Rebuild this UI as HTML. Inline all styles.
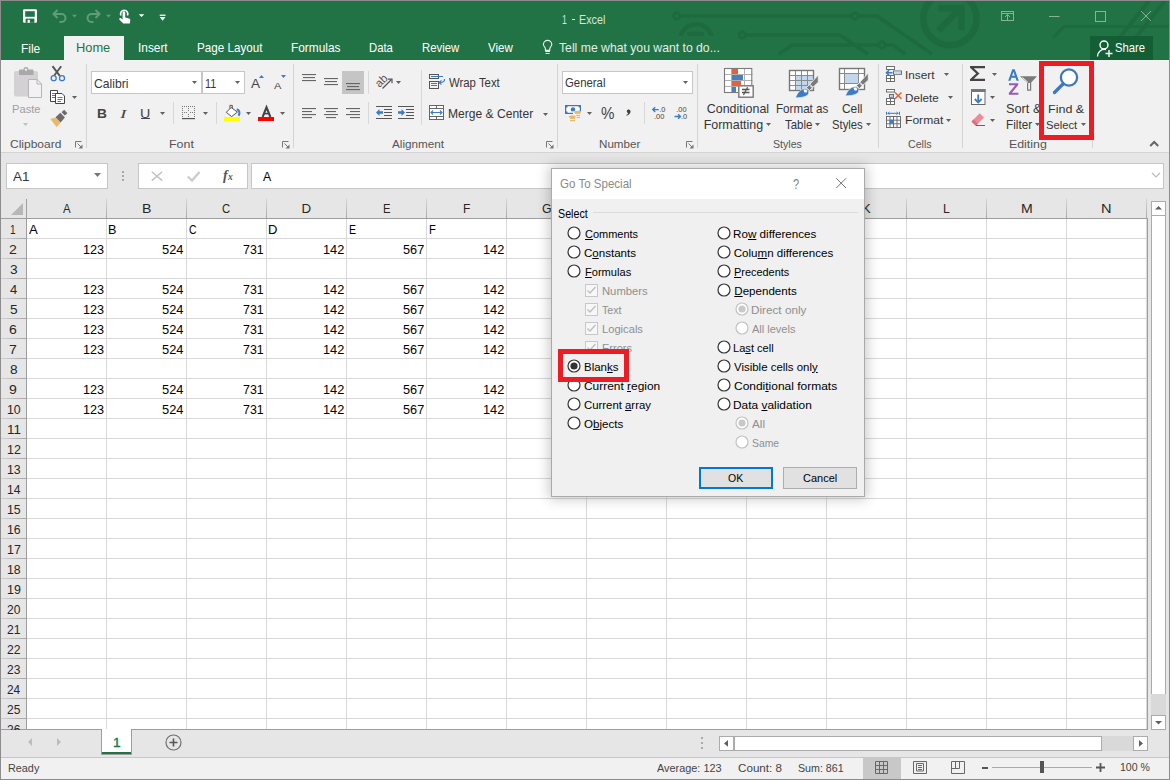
<!DOCTYPE html><html><head><meta charset="utf-8"><title>Excel</title><style>
*{margin:0;padding:0;box-sizing:border-box}
html,body{width:1170px;height:780px;overflow:hidden;background:#fff;font-family:"Liberation Sans",sans-serif;color:#262626}
.a{position:absolute}
.t{position:absolute;white-space:nowrap;transform-origin:0 0;line-height:normal}
svg{position:absolute;overflow:visible}
</style></head><body>
<div class="a" style="left:0px;top:0px;width:1170px;height:780px;background:#f1f1f1;"></div>
<div class="a" style="left:0px;top:0px;width:1170px;height:60px;background:#217346;"></div>
<svg style="left:0px;top:0px" width="1170" height="60" viewBox="0 0 1170 60"><defs><clipPath id="cpA"><rect x="670" y="0" width="60" height="36"/></clipPath></defs>
<g fill="none" stroke="#1e6a3f" stroke-width="3.6">
<circle cx="676.8" cy="16" r="3.2" stroke-width="3"/><path d="M680 16H851.5"/><circle cx="855" cy="16" r="3.2" stroke-width="3"/><path d="M858.5 16H877L932 54"/>
<circle cx="742.2" cy="35" r="3.2" stroke-width="3"/><path d="M745.5 35H840L868 54"/>
<path d="M779 54L792 45H878.5"/><circle cx="882" cy="45" r="3.2" stroke-width="3"/><path d="M885.5 45H893L905 54"/>
<circle cx="696.2" cy="40.3" r="16" stroke-width="4.4" clip-path="url(#cpA)"/>
<circle cx="949.9" cy="18.6" r="26.6" stroke-width="6.7"/>
<path d="M1053 38L1064 26.5H1170" stroke-width="3"/>
<path d="M1120 37L1149 1M1136 37L1165 1" stroke-width="4"/>
</g>
<rect x="687" y="31.7" width="16.7" height="4.2" fill="#1e6a3f"/>
<path d="M938.5 30.5L960 9" stroke="#1e6a3f" stroke-width="6.5" fill="none"/>
<path d="M938.3 8.35H961.45V30.3" stroke="#1e6a3f" stroke-width="6.5" fill="none"/></svg>
<svg style="left:0px;top:0px" width="200" height="35" viewBox="0 0 200 35">
<rect x="23" y="9.2" width="14" height="13.6" rx="1.2" fill="#fff"/>
<rect x="25.2" y="11.2" width="9.6" height="5.6" fill="#217346"/>
<rect x="25.6" y="18.6" width="8.8" height="4.2" fill="#217346"/>
<rect x="27.6" y="19.8" width="2.2" height="3" fill="#fff"/>
<g fill="none" stroke="#5f9c79" stroke-width="2">
<path d="M53.5 14H61.5A4 4 0 0 1 61.5 22H59.5"/><path d="M57.5 10L53.5 14L57.5 18"/>
<path d="M99.5 14H91.5A4 4 0 0 0 91.5 22H93.5"/><path d="M95.5 10L99.5 14L95.5 18"/></g>
<path d="M72 14.8H77L74.5 17.5Z M106 14.8H111L108.5 17.5Z" fill="#5f9c79"/>
<g fill="#fff"><path d="M138.8 14.2H144.3L141.5 17Z"/><path d="M159.7 17H165.5L162.6 20.8Z"/><rect x="159.7" y="14.6" width="5.8" height="1.3"/></g>
<g fill="none" stroke="#fff" stroke-width="1.6"><path d="M121 15.5A3.6 3.6 0 1 1 127.4 15.5"/></g>
<path d="M122.6 12.6A1.3 1.3 0 0 1 125.2 12.6V17.6L129 18.6A1.5 1.5 0 0 1 130.3 20.2L129.8 23.6H123.2L119.5 19.7A1 1 0 0 1 121 18.3L122.6 19.5Z" fill="#fff"/>
</svg>
<div class="a" style="left:64px;top:36px;width:60px;height:25px;background:#f1f1f1;"></div>
<div class="t" style="left:20.50px;top:42.03px;font-size:12.46px;color:#ffffff;transform:scaleX(0.9574);">File</div>
<div class="t" style="left:138.26px;top:41.03px;font-size:12.46px;color:#ffffff;transform:scaleX(0.9512);">Insert</div>
<div class="t" style="left:196.53px;top:41.03px;font-size:12.46px;color:#ffffff;transform:scaleX(0.9360);">Page Layout</div>
<div class="t" style="left:290.91px;top:41.03px;font-size:12.46px;color:#ffffff;transform:scaleX(0.9519);">Formulas</div>
<div class="t" style="left:368.85px;top:41.03px;font-size:12.46px;color:#ffffff;transform:scaleX(0.9057);">Data</div>
<div class="t" style="left:421.85px;top:41.03px;font-size:12.46px;color:#ffffff;transform:scaleX(0.9101);">Review</div>
<div class="t" style="left:488.00px;top:41.03px;font-size:12.46px;color:#ffffff;transform:scaleX(0.9255);">View</div>
<div class="t" style="left:76.34px;top:41.03px;font-size:12.46px;color:#217346;transform:scaleX(1.0289);">Home</div>
<svg style="left:535px;top:36px" width="25" height="22" viewBox="0 0 25 22"><g transform="translate(-535,-36)"><path d="M545.4 50.2V48.8C545.4 47.3 543.4 46.2 543.4 44.6A4.2 4.2 0 0 1 551.8 44.6C551.8 46.2 549.8 47.3 549.8 48.8V50.2Z" fill="none" stroke="#eef4f0" stroke-width="1.1"/>
<rect x="545.3" y="50" width="4.6" height="2" fill="#eef4f0"/><rect x="545.6" y="53" width="4" height="1" fill="#eef4f0"/></g></svg>
<div class="t" style="left:558.99px;top:41.03px;font-size:12.46px;color:#e3eee7;transform:scaleX(0.9803);">Tell me what you want to do...</div>
<div class="t" style="left:561.95px;top:12.90px;font-size:12.61px;color:#d3e6db;transform:scaleX(0.6889);">1</div>
<div class="a" style="left:572px;top:19px;width:3.1px;height:1.2px;background:#d3e6db;"></div>
<div class="t" style="left:578.89px;top:12.90px;font-size:12.61px;color:#d3e6db;transform:scaleX(0.8517);">Excel</div>
<svg style="left:0px;top:0px" width="1170" height="35" viewBox="0 0 1170 35"><g fill="none" stroke="#86b397" stroke-width="1">
<rect x="1001.5" y="11.5" width="12" height="9"/><path d="M1001.5 13.5H1013.5M1007.5 20.5V14.5M1005 17L1007.5 14.5L1010 17"/>
<path d="M1049 16.5H1059.5"/><rect x="1095.5" y="11.5" width="10" height="10"/><path d="M1141 11L1151 21M1151 11L1141 21"/></g></svg>
<div class="a" style="left:1090px;top:36px;width:63px;height:24px;background:#135e35;"></div>
<svg style="left:1096px;top:40px" width="18" height="18" viewBox="0 0 18 18"><g fill="none" stroke="#fff" stroke-width="1.4"><circle cx="8" cy="5" r="4"/><path d="M1.5 16.5A7 7 0 0 1 10 9.5"/><path d="M13 10V17M9.5 13.5H16.5"/></g></svg>
<div class="t" style="left:1115.44px;top:40.47px;font-size:12.75px;color:#ffffff;transform:scaleX(0.8831);">Share</div>
<div class="a" style="left:0px;top:60px;width:1170px;height:92px;background:#f1f1f1;"></div>
<div class="a" style="left:0px;top:152px;width:1170px;height:1px;background:#d4d4d4;"></div>
<div class="a" style="left:86px;top:64px;width:1px;height:84px;background:#d4d4d4;"></div>
<div class="a" style="left:293px;top:64px;width:1px;height:84px;background:#d4d4d4;"></div>
<div class="a" style="left:557px;top:64px;width:1px;height:84px;background:#d4d4d4;"></div>
<div class="a" style="left:697px;top:64px;width:1px;height:84px;background:#d4d4d4;"></div>
<div class="a" style="left:878px;top:64px;width:1px;height:84px;background:#d4d4d4;"></div>
<div class="a" style="left:962px;top:64px;width:1px;height:84px;background:#d4d4d4;"></div>
<div class="a" style="left:1092px;top:64px;width:1px;height:84px;background:#d4d4d4;"></div>
<div class="a" style="left:368px;top:71px;width:1px;height:23px;background:#d8d8d8;"></div>
<div class="a" style="left:368px;top:102px;width:1px;height:22px;background:#d8d8d8;"></div>
<div class="a" style="left:421px;top:70px;width:1px;height:55px;background:#d8d8d8;"></div>
<div class="a" style="left:644px;top:102px;width:1px;height:22px;background:#d8d8d8;"></div>
<div class="a" style="left:173px;top:102px;width:1px;height:22px;background:#d8d8d8;"></div>
<div class="a" style="left:216px;top:102px;width:1px;height:22px;background:#d8d8d8;"></div>
<div class="t" style="left:10.00px;top:137.90px;font-size:11.30px;color:#555555;transform:scaleX(1.0626);">Clipboard</div>
<div class="t" style="left:169.06px;top:137.90px;font-size:11.30px;color:#555555;transform:scaleX(1.1029);">Font</div>
<div class="t" style="left:391.50px;top:137.90px;font-size:11.30px;color:#555555;transform:scaleX(1.0366);">Alignment</div>
<div class="t" style="left:598.53px;top:137.90px;font-size:11.30px;color:#555555;transform:scaleX(1.0296);">Number</div>
<div class="t" style="left:772.97px;top:137.90px;font-size:11.30px;color:#555555;transform:scaleX(0.9391);">Styles</div>
<div class="t" style="left:908.07px;top:137.90px;font-size:11.30px;color:#555555;transform:scaleX(0.9395);">Cells</div>
<div class="t" style="left:1008.87px;top:137.90px;font-size:11.30px;color:#555555;transform:scaleX(1.0934);">Editing</div>
<svg style="left:75px;top:141px" width="8" height="8" viewBox="0 0 8 8"><g fill="none" stroke="#777" stroke-width="1"><path d="M0.5 6.5V0.5H6.5"/><path d="M2.5 2.5L6.5 6.5"/></g><path d="M7.5 3.5V7.5H3.5Z" fill="#777"/></svg>
<svg style="left:282px;top:141px" width="8" height="8" viewBox="0 0 8 8"><g fill="none" stroke="#777" stroke-width="1"><path d="M0.5 6.5V0.5H6.5"/><path d="M2.5 2.5L6.5 6.5"/></g><path d="M7.5 3.5V7.5H3.5Z" fill="#777"/></svg>
<svg style="left:546px;top:141px" width="8" height="8" viewBox="0 0 8 8"><g fill="none" stroke="#777" stroke-width="1"><path d="M0.5 6.5V0.5H6.5"/><path d="M2.5 2.5L6.5 6.5"/></g><path d="M7.5 3.5V7.5H3.5Z" fill="#777"/></svg>
<svg style="left:686px;top:141px" width="8" height="8" viewBox="0 0 8 8"><g fill="none" stroke="#777" stroke-width="1"><path d="M0.5 6.5V0.5H6.5"/><path d="M2.5 2.5L6.5 6.5"/></g><path d="M7.5 3.5V7.5H3.5Z" fill="#777"/></svg>
<svg style="left:1148px;top:139px" width="12" height="9" viewBox="0 0 12 9"><path d="M2.2 7L6.2 3L10.2 7" fill="none" stroke="#666" stroke-width="2"/></svg>
<svg style="left:0px;top:60px" width="90" height="80" viewBox="0 0 90 80">
<g transform="translate(0,-60)">
<rect x="14" y="71" width="24" height="25.5" rx="2" fill="#d3d1d3"/>
<path d="M19.5 69.5H23.5A2.5 2.5 0 0 1 28.5 69.5H32.5A1 1 0 0 1 33.5 70.5V75H19V70.5A1 1 0 0 1 19.5 69.5Z" fill="#a9a9a9"/>
<circle cx="26" cy="69.6" r="1.2" fill="#f1f1f1"/>
<path d="M28.5 79.5H37L41.5 84V97.5H28.5Z" fill="#f4f1f4" stroke="#b5b5b5" stroke-width="1"/>
<path d="M37 79.5V84H41.5" fill="none" stroke="#b5b5b5" stroke-width="1"/>
<g fill="none" stroke="#555" stroke-width="1.9"><path d="M52.5 66.2L59.8 75.8M61.2 66.2L54 75.8"/></g>
<g fill="none" stroke="#3c7bc6" stroke-width="1.3"><circle cx="53.7" cy="78.2" r="2.5"/><circle cx="62" cy="78.2" r="2.5"/></g>
<path d="M50.5 90.5H57.5V101.5H50.5Z" fill="#fff" stroke="#444" stroke-width="1"/>
<path d="M52 93.5H56M52 95.5H56M52 97.5H55" stroke="#3c7bc6" stroke-width="1"/>
<path d="M55.5 93.5H62L64.5 96V103.5H55.5Z" fill="#fff" stroke="#444" stroke-width="1"/>
<path d="M57.5 97.5H62.5M57.5 99.5H62.5M57.5 101.5H61" stroke="#3c7bc6" stroke-width="1"/>
<path d="M50.3 119.1L55.8 117.4L60.6 122.6L56.8 127.2Z" fill="#e8b96a"/>
<path d="M55.6 117.2L60.3 112.8L64.9 117.6L60.6 122.4Z" fill="#6b6b6b"/>
<path d="M61.6 112.2L64.2 109.8L67.4 113.2L64.8 115.6Z" fill="#6b6b6b"/>
</g></svg>
<svg style="left:72px;top:96px" width="5" height="3" viewBox="0 0 5 3"><path d="M0 0H5L2.5 3Z" fill="#606060"/></svg>
<div class="t" style="left:11.96px;top:102.63px;font-size:11.59px;color:#a0a0a0;transform:scaleX(0.9625);">Paste</div>
<svg style="left:23px;top:123px" width="5" height="3" viewBox="0 0 5 3"><path d="M0 0H5L2.5 3Z" fill="#c0c0c0"/></svg>
<div class="a" style="left:91px;top:71px;width:111px;height:23px;background:#fff;border:1px solid #c6c6c6;"></div>
<div class="a" style="left:202px;top:71px;width:43px;height:23px;background:#fff;border:1px solid #c6c6c6;"></div>
<div class="t" style="left:93.69px;top:75.90px;font-size:13.04px;color:#363636;transform:scaleX(0.9341);">Calibri</div>
<div class="t" style="left:204.99px;top:75.90px;font-size:13.04px;color:#363636;transform:scaleX(0.8318);">11</div>
<svg style="left:192px;top:81px" width="5" height="3" viewBox="0 0 5 3"><path d="M0 0H5L2.5 3Z" fill="#606060"/></svg>
<svg style="left:235px;top:81px" width="5" height="3" viewBox="0 0 5 3"><path d="M0 0H5L2.5 3Z" fill="#606060"/></svg>
<div class="t" style="left:251.00px;top:76.10px;font-size:13.48px;color:#444;transform:scaleX(1.0079);">A</div>
<div class="t" style="left:274.20px;top:80.50px;font-size:8.70px;color:#444;transform:scaleX(1.2672);">A</div>
<svg style="left:259px;top:75px" width="5" height="3" viewBox="0 0 5 3"><path d="M0 3L2.5 0L5 3Z" fill="#3c7bc6"/></svg>
<svg style="left:281px;top:75px" width="5" height="3" viewBox="0 0 5 3"><path d="M0 0L2.5 3L5 0Z" fill="#3c7bc6"/></svg>
<div class="t" style="left:96.54px;top:105.50px;font-size:13.04px;color:#444;transform:scaleX(1.0514);font-weight:bold">B</div>
<div class="t" style="left:119.70px;top:105.50px;font-size:13.04px;color:#444;transform:scaleX(1.4924);font-style:italic;font-family:'Liberation Serif',serif">I</div>
<div class="t" style="left:140.33px;top:105.50px;font-size:13.04px;color:#444;transform:scaleX(1.0933);">U</div>
<div class="a" style="left:141px;top:118px;width:9px;height:1px;background:#444;"></div>
<svg style="left:160px;top:112px" width="5" height="3" viewBox="0 0 5 3"><path d="M0 0H5L2.5 3Z" fill="#606060"/></svg>
<svg style="left:181px;top:105px" width="15" height="15" viewBox="0 0 15 15"><g fill="#777"><path d="M1 1h1v1h-1zM3 1h1v1h-1zM5 1h1v1h-1zM7 1h1v1h-1zM9 1h1v1h-1zM11 1h1v1h-1zM13 1h1v1h-1zM1 3h1v1h-1zM1 5h1v1h-1zM1 7h1v1h-1zM1 9h1v1h-1zM1 11h1v1h-1zM13 3h1v1h-1zM13 5h1v1h-1zM13 7h1v1h-1zM13 9h1v1h-1zM13 11h1v1h-1zM7 3h1v1h-1zM7 5h1v1h-1zM7 9h1v1h-1zM7 11h1v1h-1zM3 7h1v1h-1zM5 7h1v1h-1zM9 7h1v1h-1zM11 7h1v1h-1z"/></g><rect x="1" y="13" width="13" height="1.2" fill="#555"/></svg>
<svg style="left:203px;top:112px" width="5" height="3" viewBox="0 0 5 3"><path d="M0 0H5L2.5 3Z" fill="#606060"/></svg>
<svg style="left:220px;top:100px" width="25" height="25" viewBox="0 0 25 25"><g transform="translate(-220,-100)"><path d="M226.3 112.3L231.2 107.4L237.4 112.1L231.6 116.6Z" fill="#fff" stroke="#555" stroke-width="1"/>
<path d="M229.9 108.6V105.4H232.3V108.8" fill="none" stroke="#555" stroke-width="1"/>
<path d="M236.8 109.3Q241 110.8 238.6 115.8" fill="none" stroke="#3c7bc6" stroke-width="2"/>
<rect x="224" y="117" width="16" height="4" fill="#ffff00"/></g></svg>
<svg style="left:246px;top:112px" width="5" height="3" viewBox="0 0 5 3"><path d="M0 0H5L2.5 3Z" fill="#606060"/></svg>
<svg style="left:255px;top:100px" width="25" height="25" viewBox="0 0 25 25"><g transform="translate(-255,-100)"><path d="M262.6 117L266.5 107.3L270.4 117" fill="none" stroke="#444" stroke-width="2.1"/><path d="M264.2 113.6H268.8" stroke="#444" stroke-width="1.6"/></g></svg>
<div class="a" style="left:258px;top:117px;width:16px;height:4px;background:#ff0000;"></div>
<svg style="left:280px;top:112px" width="5" height="3" viewBox="0 0 5 3"><path d="M0 0H5L2.5 3Z" fill="#606060"/></svg>
<svg style="left:302px;top:74px" width="20" height="20" viewBox="0 0 20 20"><g fill="#666"><rect x="0" y="0" width="14" height="1.1"/><rect x="1" y="3" width="12" height="1.1"/><rect x="0" y="6" width="14" height="1.1"/></g></svg>
<svg style="left:324px;top:78px" width="20" height="20" viewBox="0 0 20 20"><g fill="#666"><rect x="0" y="0" width="14" height="1.1"/><rect x="1" y="3" width="12" height="1.1"/><rect x="0" y="6" width="14" height="1.1"/></g></svg>
<div class="a" style="left:342px;top:71px;width:22px;height:23px;background:#c5c5c5;"></div>
<svg style="left:346px;top:83px" width="20" height="20" viewBox="0 0 20 20"><g fill="#666"><rect x="0" y="0" width="14" height="1.1"/><rect x="1" y="3" width="12" height="1.1"/><rect x="0" y="6" width="14" height="1.1"/></g></svg>
<svg style="left:302px;top:108px" width="20" height="20" viewBox="0 0 20 20"><g fill="#666"><rect x="0" y="0" width="14" height="1.1"/><rect x="0" y="3" width="10" height="1.1"/><rect x="0" y="6" width="14" height="1.1"/><rect x="0" y="9" width="10" height="1.1"/></g></svg>
<svg style="left:324px;top:108px" width="20" height="20" viewBox="0 0 20 20"><g fill="#666"><rect x="0" y="0" width="14" height="1.1"/><rect x="2" y="3" width="10" height="1.1"/><rect x="0" y="6" width="14" height="1.1"/><rect x="2" y="9" width="10" height="1.1"/></g></svg>
<svg style="left:346px;top:108px" width="20" height="20" viewBox="0 0 20 20"><g fill="#666"><rect x="0" y="0" width="14" height="1.1"/><rect x="4" y="3" width="10" height="1.1"/><rect x="0" y="6" width="14" height="1.1"/><rect x="4" y="9" width="10" height="1.1"/></g></svg>
<svg style="left:370px;top:66px" width="30" height="30" viewBox="0 0 30 30"><g transform="translate(-370,-66)">
<text x="0" y="0" font-family="Liberation Sans" font-size="11.5" fill="#555" transform="translate(379.5,88) rotate(-45)">ab</text>
<path d="M382.5 88.5L391.5 79.5" stroke="#555" stroke-width="1.2"/><path d="M388 79.2H392V83.2" fill="none" stroke="#555" stroke-width="1.2"/></g></svg>
<svg style="left:396px;top:81px" width="5" height="3" viewBox="0 0 5 3"><path d="M0 0H5L2.5 3Z" fill="#606060"/></svg>
<svg style="left:370px;top:100px" width="50" height="25" viewBox="0 0 50 25"><g transform="translate(-370,-100)"><g fill="#555">
<rect x="376" y="106" width="16" height="1"/><rect x="384" y="109" width="8" height="1"/><rect x="384" y="112" width="8" height="1"/><rect x="384" y="115" width="8" height="1"/><rect x="376" y="118" width="16" height="1"/>
<rect x="398" y="106" width="16" height="1"/><rect x="406" y="109" width="8" height="1"/><rect x="406" y="112" width="8" height="1"/><rect x="406" y="115" width="8" height="1"/><rect x="398" y="118" width="16" height="1"/>
</g><g fill="#3c7bc6"><path d="M376 112.5L379.5 109V111.3H383V113.7H379.5V116Z"/><path d="M405 112.5L401.5 109V111.3H398V113.7H401.5V116Z"/></g></g></svg>
<svg style="left:420px;top:66px" width="30" height="30" viewBox="0 0 30 30"><g transform="translate(-420,-66)"><g fill="none" stroke="#555" stroke-width="1">
<rect x="429.5" y="74.5" width="9" height="4"/><rect x="429.5" y="81.5" width="9" height="7"/></g>
<path d="M431 76.5H443M431 83.5H437M431 85.5H437" stroke="#3c7bc6" stroke-width="1"/>
<path d="M444.5 79Q445 82.5 440 82.5" fill="none" stroke="#3c7bc6" stroke-width="1.2"/><path d="M441.5 80.5L439 82.5L441.5 84.5" fill="none" stroke="#3c7bc6" stroke-width="1.2"/></g></svg>
<div class="t" style="left:448.80px;top:76.10px;font-size:12.61px;color:#363636;transform:scaleX(0.9011);">Wrap Text</div>
<svg style="left:420px;top:100px" width="30" height="25" viewBox="0 0 30 25"><g transform="translate(-420,-100)"><rect x="429.5" y="105.5" width="14" height="14" fill="#fff" stroke="#666" stroke-width="1"/>
<path d="M429.5 108.5H443.5M429.5 116.5H443.5M436.5 105.5V108.5M436.5 116.5V119.5" stroke="#666" stroke-width="1"/>
<path d="M431.5 112.5H441.5" stroke="#3c7bc6" stroke-width="1"/><path d="M433 110.5L431 112.5L433 114.5M440 110.5L442 112.5L440 114.5" fill="none" stroke="#3c7bc6" stroke-width="1.1"/></g></svg>
<div class="t" style="left:447.90px;top:106.60px;font-size:12.61px;color:#363636;transform:scaleX(0.9569);">Merge &amp; Center</div>
<svg style="left:543px;top:113px" width="5" height="3" viewBox="0 0 5 3"><path d="M0 0H5L2.5 3Z" fill="#606060"/></svg>
<div class="a" style="left:562px;top:71px;width:131px;height:23px;background:#fff;border:1px solid #c6c6c6;"></div>
<div class="t" style="left:564.93px;top:75.70px;font-size:12.61px;color:#363636;transform:scaleX(0.9021);">General</div>
<svg style="left:683px;top:81px" width="5" height="3" viewBox="0 0 5 3"><path d="M0 0H5L2.5 3Z" fill="#606060"/></svg>
<svg style="left:560px;top:100px" width="30" height="25" viewBox="0 0 30 25"><g transform="translate(-560,-100)">
<rect x="565" y="105" width="16" height="9" fill="#3d78bd"/>
<path d="M567.5 106.2H578.6V107.5H579.8V110.8H578.6V112.8H567.5V111.5H566.3V107.5H567.5Z" fill="#fff"/>
<circle cx="573" cy="109.4" r="2.2" fill="#3d78bd"/>
<rect x="573" y="111.5" width="8.5" height="3.2" fill="#f1f1f1"/>
<g fill="#e8b96a"><ellipse cx="577.6" cy="111.9" rx="3.5" ry="1.2"/><rect x="575" y="112.6" width="5.2" height="1.3"/><rect x="576.3" y="114.9" width="3.8" height="1.2"/><rect x="576.8" y="117" width="3.2" height="1.1"/>
<ellipse cx="572.3" cy="116.8" rx="3.5" ry="1.2"/><rect x="570" y="117.6" width="5" height="1.3"/><rect x="570" y="120" width="5" height="1.2"/></g>
</g></svg>
<svg style="left:587px;top:112px" width="5" height="3" viewBox="0 0 5 3"><path d="M0 0H5L2.5 3Z" fill="#606060"/></svg>
<div class="t" style="left:600.73px;top:104.83px;font-size:15.94px;color:#444;transform:scaleX(0.9496);">%</div>
<svg style="left:625px;top:109px" width="7" height="8" viewBox="0 0 7 8"><path d="M3.2 0.5A2.2 2.2 0 0 1 5.6 2.6C5.6 4.5 4 6.2 1.6 6.8L1.3 6C2.6 5.4 3.2 4.6 3.1 4A1.8 1.8 0 0 1 3.2 0.5Z" fill="#444"/></svg>
<svg style="left:651px;top:104px" width="40" height="18" viewBox="0 0 40 18"><g font-family="Liberation Sans" font-size="7.4" fill="#444">
<text x="8.3" y="7.8">.0</text><text x="3" y="14.9">.00</text><text x="25.3" y="7.8">.00</text><text x="30" y="14.9">.0</text></g>
<g fill="none" stroke="#3c7bc6" stroke-width="1.4"><path d="M1.8 5.6H7.8M4.2 3.3L1.8 5.6L4.2 7.9"/><path d="M23.5 12.5H29.5M27.1 10.2L29.5 12.5L27.1 14.8"/></g></svg>
<svg style="left:715px;top:60px" width="45" height="45" viewBox="0 0 45 45"><g transform="translate(-715,-60)">
<rect x="724.5" y="68.5" width="28" height="24" fill="#fff"/>
<path d="M724.5 74.5H752.5M724.5 80.5H752.5M724.5 86.5H752.5M731.5 68.5V92.5M744.5 68.5V92.5" stroke="#b0b0b0" stroke-width="1"/>
<rect x="732" y="69" width="6" height="5" fill="#e0633d"/><rect x="732" y="75" width="11" height="5" fill="#4a7fbd"/><rect x="732" y="81" width="9" height="5" fill="#e0633d"/><rect x="732" y="87" width="4" height="5" fill="#4a7fbd"/>
<rect x="724.5" y="68.5" width="27.3" height="24" fill="none" stroke="#7a7a7a" stroke-width="1.1"/>
<rect x="738" y="85" width="16" height="13" fill="#f1f1f1"/>
<rect x="738.8" y="85.8" width="14.4" height="11.4" fill="#fff" stroke="#777" stroke-width="1.4"/>
<path d="M742 89.5H749.5M742 92.5H749.5M743.5 95L747.6 87.3" stroke="#555" stroke-width="1.3"/>
</g></svg>
<div class="t" style="left:706.77px;top:101.93px;font-size:12.46px;color:#363636;">Conditional</div>
<div class="t" style="left:703.67px;top:117.63px;font-size:12.46px;color:#363636;">Formatting</div>
<svg style="left:766px;top:123px" width="5" height="3" viewBox="0 0 5 3"><path d="M0 0H5L2.5 3Z" fill="#606060"/></svg>
<svg style="left:780px;top:60px" width="100" height="45" viewBox="0 0 100 45"><g transform="translate(-780,-60)">
<rect x="789.5" y="70.5" width="24" height="20" fill="#fff" stroke="#777" stroke-width="1.2"/>
<rect x="796" y="75.7" width="17" height="14.5" fill="#c2d6ec"/>
<path d="M789.5 75.5H813.5M789.5 80.5H813.5M789.5 85.5H813.5M795.5 70.5V90.5M801.5 70.5V90.5M807.5 70.5V90.5" stroke="#8a8a8a" stroke-width="1"/>
<rect x="789.5" y="70.5" width="24" height="20" fill="none" stroke="#777" stroke-width="1.2"/>
<path d="M818.3 75L818.3 82.2L813 87.2L809.8 84.2Z" fill="#7a7a7a" stroke="#f1f1f1" stroke-width="0.9"/>
<path d="M809.3 84.8L812.4 87.8L809.4 90.6L806.3 87.6Z" fill="#7a7a7a" stroke="#f1f1f1" stroke-width="0.9"/>
<path d="M795.5 97.8C797.5 93 800 89.5 803.5 89A3.7 3.7 0 0 1 808.6 93.5C807.5 96.5 802 97.8 795.5 97.8Z" fill="#3c7bc6" stroke="#f1f1f1" stroke-width="0.6"/>
<path d="M803.5 90.3A2 2 0 0 1 806.8 92.6L804.5 92.4Z" fill="#fff"/>
<rect x="839.5" y="68.5" width="25" height="21" fill="#fff" stroke="#777" stroke-width="1.2"/>
<rect x="844.5" y="73.5" width="14" height="10" fill="#c2d6ec"/>
<path d="M839.5 73.5H864.5M839.5 83.5H864.5M844.5 68.5V89.5M858.5 68.5V89.5" stroke="#8a8a8a" stroke-width="1"/>
<rect x="839.5" y="68.5" width="25" height="21" fill="none" stroke="#777" stroke-width="1.2"/>
<g transform="translate(50,-2)"><path d="M818.3 75L818.3 82.2L813 87.2L809.8 84.2Z" fill="#7a7a7a" stroke="#f1f1f1" stroke-width="0.9"/>
<path d="M809.3 84.8L812.4 87.8L809.4 90.6L806.3 87.6Z" fill="#7a7a7a" stroke="#f1f1f1" stroke-width="0.9"/>
<path d="M795.5 97.8C797.5 93 800 89.5 803.5 89A3.7 3.7 0 0 1 808.6 93.5C807.5 96.5 802 97.8 795.5 97.8Z" fill="#3c7bc6" stroke="#f1f1f1" stroke-width="0.6"/>
<path d="M803.5 90.3A2 2 0 0 1 806.8 92.6L804.5 92.4Z" fill="#fff"/></g>
</g></svg>
<div class="t" style="left:775.73px;top:101.93px;font-size:12.46px;color:#363636;transform:scaleX(0.9344);">Format as</div>
<div class="t" style="left:785.11px;top:117.63px;font-size:12.46px;color:#363636;transform:scaleX(0.9179);">Table</div>
<svg style="left:815px;top:123px" width="5" height="3" viewBox="0 0 5 3"><path d="M0 0H5L2.5 3Z" fill="#606060"/></svg>
<div class="t" style="left:841.70px;top:101.93px;font-size:12.46px;color:#363636;transform:scaleX(0.9553);">Cell</div>
<div class="t" style="left:832.44px;top:117.63px;font-size:12.46px;color:#363636;transform:scaleX(0.9065);">Styles</div>
<svg style="left:866px;top:123px" width="5" height="3" viewBox="0 0 5 3"><path d="M0 0H5L2.5 3Z" fill="#606060"/></svg>
<svg style="left:880px;top:60px" width="30" height="75" viewBox="0 0 30 75"><g transform="translate(-880,-60)"><g fill="#fff" stroke="#6d6d6d" stroke-width="1">
<rect x="886.5" y="66.5" width="8" height="3"/><rect x="886.5" y="75.5" width="8" height="6"/><path d="M886.5 78.5H894.5M890.5 75.5V81.5"/>
<rect x="893.5" y="71" width="8" height="3.3"/>
<rect x="886.5" y="89.5" width="8" height="2.5"/><rect x="886.5" y="98.5" width="8" height="6"/><path d="M886.5 101.5H894.5M890.5 98.5V104.5"/>
<rect x="889.5" y="94.5" width="4" height="2.8"/>
<rect x="886.5" y="116.5" width="14" height="11"/><path d="M886.5 120.2H900.5M886.5 123.8H900.5M890 116.5V127.5M893.5 116.5V127.5M897 116.5V127.5"/></g>
<rect x="894.5" y="71.7" width="3" height="2" fill="#bcd3ec"/><rect x="898" y="71.7" width="3" height="2" fill="#bcd3ec"/>
<rect x="890" y="95" width="3" height="2" fill="#bcd3ec"/>
<path d="M886.5 72.7H892.5M889 70.2L886.5 72.7L889 75.2" fill="none" stroke="#3c7bc6" stroke-width="1.6"/>
<path d="M895 92.5L901.5 98.8M901.5 92.5L895 98.8" stroke="#e0603a" stroke-width="1.5"/>
<rect x="889.5" y="119.8" width="4.5" height="3.8" fill="#3c7bc6"/>
<path d="M887.5 113.3H898.5M886.5 111.8V114.8M899.5 111.8V114.8M889.5 112L888 113.3L889.5 114.6M896.5 112L898 113.3L896.5 114.6" fill="none" stroke="#3c7bc6" stroke-width="1"/>
</g></svg>
<div class="t" style="left:904.57px;top:68.93px;font-size:11.59px;color:#363636;transform:scaleX(1.0153);">Insert</div>
<svg style="left:944px;top:73px" width="5" height="3" viewBox="0 0 5 3"><path d="M0 0H5L2.5 3Z" fill="#606060"/></svg>
<div class="t" style="left:904.72px;top:91.73px;font-size:11.59px;color:#363636;transform:scaleX(1.0070);">Delete</div>
<svg style="left:948px;top:96px" width="5" height="3" viewBox="0 0 5 3"><path d="M0 0H5L2.5 3Z" fill="#606060"/></svg>
<div class="t" style="left:904.69px;top:114.43px;font-size:11.59px;color:#363636;transform:scaleX(1.0448);">Format</div>
<svg style="left:946px;top:119px" width="5" height="3" viewBox="0 0 5 3"><path d="M0 0H5L2.5 3Z" fill="#606060"/></svg>
<svg style="left:960px;top:60px" width="80" height="75" viewBox="0 0 80 75"><g transform="translate(-960,-60)">
<path d="M970 66H985V68.2H973.8L979.5 73.5L973.8 78.8H985V81H970V79.2L976.2 73.5L970 67.8Z" fill="#444"/>
<rect x="971.5" y="89.5" width="13.5" height="15" fill="#fff" stroke="#666" stroke-width="1"/><rect x="971" y="89" width="14.5" height="3" fill="#777"/>
<path d="M978.2 94.5V102.5" stroke="#3c7bc6" stroke-width="1.8"/><path d="M974.8 99L978.2 102.5L981.6 99" fill="none" stroke="#3c7bc6" stroke-width="1.8"/>
<path d="M971.5 121.5L979.7 113.3L984 117.6L975.8 125.8Z" fill="#e88d9a"/><path d="M971.5 121.5L973.6 119.4L977.9 123.7L975.8 125.8Z" fill="#e06a7c"/>
<path d="M976 125.5H985" stroke="#666" stroke-width="1"/>
<path d="M1008.2 80.8L1012.3 69.2H1014.7L1018.8 80.8H1016.5L1015.5 77.8H1011.4L1010.4 80.8ZM1012.1 75.8H1014.8L1013.5 71.8Z" fill="#3c7bc6"/>
<path d="M1009 83.2H1018.2V85L1011.8 92.8H1018.4V94.8H1008.8V93L1015.2 85.2H1009Z" fill="#9b59b6"/>
<path d="M1020 76.2H1037L1031.2 82.5V90.8H1027V82.5Z" fill="#7a7a7a"/><path d="M1028.2 83V89.6H1030V83Z" fill="#f1f1f1"/><path d="M1022.5 77.5L1028 82.5" stroke="#f1f1f1" stroke-width="1"/>
</g></svg>
<svg style="left:992px;top:73px" width="5" height="3" viewBox="0 0 5 3"><path d="M0 0H5L2.5 3Z" fill="#606060"/></svg>
<svg style="left:990px;top:96px" width="5" height="3" viewBox="0 0 5 3"><path d="M0 0H5L2.5 3Z" fill="#606060"/></svg>
<svg style="left:990px;top:119px" width="5" height="3" viewBox="0 0 5 3"><path d="M0 0H5L2.5 3Z" fill="#606060"/></svg>
<div class="t" style="left:1005.76px;top:101.87px;font-size:11.88px;color:#363636;transform:scaleX(1.0734);">Sort &amp;</div>
<div class="t" style="left:1005.52px;top:118.07px;font-size:11.88px;color:#363636;transform:scaleX(0.9881);">Filter</div>
<svg style="left:1035px;top:123px" width="5" height="3" viewBox="0 0 5 3"><path d="M0 0H5L2.5 3Z" fill="#606060"/></svg>
<svg style="left:1050px;top:66px" width="32" height="30" viewBox="0 0 32 30"><g fill="#fff" stroke="#3d78bd"><circle cx="19" cy="11.5" r="8.1" stroke-width="2.3"/><path d="M13 18L4.5 26.5" stroke-width="3.2" stroke-linecap="round"/></g></svg>
<div class="t" style="left:1047.56px;top:102.40px;font-size:11.74px;color:#363636;transform:scaleX(1.0679);">Find &amp;</div>
<div class="t" style="left:1045.54px;top:117.90px;font-size:11.74px;color:#363636;transform:scaleX(0.9566);">Select</div>
<svg style="left:1081px;top:123px" width="5" height="3" viewBox="0 0 5 3"><path d="M0 0H5L2.5 3Z" fill="#606060"/></svg>
<div class="a" style="left:1039px;top:61px;width:55px;height:79px;border:5px solid #ec1c24;"></div>
<div class="a" style="left:0px;top:153px;width:1170px;height:45px;background:#e6e6e6;"></div>
<div class="a" style="left:6px;top:163px;width:102px;height:26px;background:#fff;border:1px solid #c6c6c6;"></div>
<div class="t" style="left:12.90px;top:168.50px;font-size:13.04px;color:#363636;transform:scaleX(1.0309);">A1</div>
<svg style="left:94px;top:173px" width="7" height="4" viewBox="0 0 7 4"><path d="M0 0H7L3.5 4Z" fill="#777"/></svg>
<svg style="left:121px;top:171px" width="4" height="11" viewBox="0 0 4 11"><g fill="#a8a8a8"><rect x="1" y="0" width="2" height="2"/><rect x="1" y="4" width="2" height="2"/><rect x="1" y="8" width="2" height="2"/></g></svg>
<div class="a" style="left:138px;top:163px;width:110px;height:26px;background:#fff;border:1px solid #c6c6c6;"></div>
<svg style="left:140px;top:160px" width="110" height="30" viewBox="0 0 110 30"><g transform="translate(-140,-160)">
<path d="M151.8 171.8L162.2 180.6M162.2 171.8L151.8 180.6" stroke="#c2c2c2" stroke-width="1.5"/>
<path d="M187.8 176.5L192 180.6L199.5 172" fill="none" stroke="#cdcdcd" stroke-width="2.4"/>
<text x="223" y="179.5" font-family="Liberation Serif" font-style="italic" font-weight="bold" font-size="14" fill="#555">f</text>
<text x="228" y="179.8" font-family="Liberation Serif" font-style="italic" font-weight="bold" font-size="9.5" fill="#555">x</text>
</g></svg>
<div class="a" style="left:251px;top:163px;width:913px;height:26px;background:#fff;border:1px solid #c6c6c6;"></div>
<div class="t" style="left:263.20px;top:169.30px;font-size:13.04px;color:#000;transform:scaleX(0.9374);">A</div>
<svg style="left:1151px;top:172px" width="10" height="6" viewBox="0 0 10 6"><path d="M1 1L5 5L9 1" fill="none" stroke="#bbb" stroke-width="1.2"/></svg>
<div class="a" style="left:0px;top:198px;width:1148px;height:532px;background:#fff;"></div>
<div class="a" style="left:0px;top:198px;width:1148px;height:21px;background:#e6e6e6;"></div>
<div class="a" style="left:0px;top:219px;width:26px;height:511px;background:#e6e6e6;"></div>
<svg style="left:11px;top:203px" width="13" height="12" viewBox="0 0 13 12"><path d="M12 0V12H0Z" fill="#b7b7b7"/></svg>
<div class="a" style="left:27px;top:238px;width:1120px;height:1px;background:#d9d9d9;"></div>
<div class="a" style="left:0px;top:238px;width:26px;height:1px;background:linear-gradient(to right,#d4d4d4,#a6a6a6)"></div>
<div class="a" style="left:27px;top:258px;width:1120px;height:1px;background:#d9d9d9;"></div>
<div class="a" style="left:0px;top:258px;width:26px;height:1px;background:linear-gradient(to right,#d4d4d4,#a6a6a6)"></div>
<div class="a" style="left:27px;top:278px;width:1120px;height:1px;background:#d9d9d9;"></div>
<div class="a" style="left:0px;top:278px;width:26px;height:1px;background:linear-gradient(to right,#d4d4d4,#a6a6a6)"></div>
<div class="a" style="left:27px;top:298px;width:1120px;height:1px;background:#d9d9d9;"></div>
<div class="a" style="left:0px;top:298px;width:26px;height:1px;background:linear-gradient(to right,#d4d4d4,#a6a6a6)"></div>
<div class="a" style="left:27px;top:318px;width:1120px;height:1px;background:#d9d9d9;"></div>
<div class="a" style="left:0px;top:318px;width:26px;height:1px;background:linear-gradient(to right,#d4d4d4,#a6a6a6)"></div>
<div class="a" style="left:27px;top:338px;width:1120px;height:1px;background:#d9d9d9;"></div>
<div class="a" style="left:0px;top:338px;width:26px;height:1px;background:linear-gradient(to right,#d4d4d4,#a6a6a6)"></div>
<div class="a" style="left:27px;top:358px;width:1120px;height:1px;background:#d9d9d9;"></div>
<div class="a" style="left:0px;top:358px;width:26px;height:1px;background:linear-gradient(to right,#d4d4d4,#a6a6a6)"></div>
<div class="a" style="left:27px;top:378px;width:1120px;height:1px;background:#d9d9d9;"></div>
<div class="a" style="left:0px;top:378px;width:26px;height:1px;background:linear-gradient(to right,#d4d4d4,#a6a6a6)"></div>
<div class="a" style="left:27px;top:398px;width:1120px;height:1px;background:#d9d9d9;"></div>
<div class="a" style="left:0px;top:398px;width:26px;height:1px;background:linear-gradient(to right,#d4d4d4,#a6a6a6)"></div>
<div class="a" style="left:27px;top:418px;width:1120px;height:1px;background:#d9d9d9;"></div>
<div class="a" style="left:0px;top:418px;width:26px;height:1px;background:linear-gradient(to right,#d4d4d4,#a6a6a6)"></div>
<div class="a" style="left:27px;top:438px;width:1120px;height:1px;background:#d9d9d9;"></div>
<div class="a" style="left:0px;top:438px;width:26px;height:1px;background:linear-gradient(to right,#d4d4d4,#a6a6a6)"></div>
<div class="a" style="left:27px;top:458px;width:1120px;height:1px;background:#d9d9d9;"></div>
<div class="a" style="left:0px;top:458px;width:26px;height:1px;background:linear-gradient(to right,#d4d4d4,#a6a6a6)"></div>
<div class="a" style="left:27px;top:478px;width:1120px;height:1px;background:#d9d9d9;"></div>
<div class="a" style="left:0px;top:478px;width:26px;height:1px;background:linear-gradient(to right,#d4d4d4,#a6a6a6)"></div>
<div class="a" style="left:27px;top:498px;width:1120px;height:1px;background:#d9d9d9;"></div>
<div class="a" style="left:0px;top:498px;width:26px;height:1px;background:linear-gradient(to right,#d4d4d4,#a6a6a6)"></div>
<div class="a" style="left:27px;top:518px;width:1120px;height:1px;background:#d9d9d9;"></div>
<div class="a" style="left:0px;top:518px;width:26px;height:1px;background:linear-gradient(to right,#d4d4d4,#a6a6a6)"></div>
<div class="a" style="left:27px;top:538px;width:1120px;height:1px;background:#d9d9d9;"></div>
<div class="a" style="left:0px;top:538px;width:26px;height:1px;background:linear-gradient(to right,#d4d4d4,#a6a6a6)"></div>
<div class="a" style="left:27px;top:558px;width:1120px;height:1px;background:#d9d9d9;"></div>
<div class="a" style="left:0px;top:558px;width:26px;height:1px;background:linear-gradient(to right,#d4d4d4,#a6a6a6)"></div>
<div class="a" style="left:27px;top:578px;width:1120px;height:1px;background:#d9d9d9;"></div>
<div class="a" style="left:0px;top:578px;width:26px;height:1px;background:linear-gradient(to right,#d4d4d4,#a6a6a6)"></div>
<div class="a" style="left:27px;top:598px;width:1120px;height:1px;background:#d9d9d9;"></div>
<div class="a" style="left:0px;top:598px;width:26px;height:1px;background:linear-gradient(to right,#d4d4d4,#a6a6a6)"></div>
<div class="a" style="left:27px;top:618px;width:1120px;height:1px;background:#d9d9d9;"></div>
<div class="a" style="left:0px;top:618px;width:26px;height:1px;background:linear-gradient(to right,#d4d4d4,#a6a6a6)"></div>
<div class="a" style="left:27px;top:638px;width:1120px;height:1px;background:#d9d9d9;"></div>
<div class="a" style="left:0px;top:638px;width:26px;height:1px;background:linear-gradient(to right,#d4d4d4,#a6a6a6)"></div>
<div class="a" style="left:27px;top:658px;width:1120px;height:1px;background:#d9d9d9;"></div>
<div class="a" style="left:0px;top:658px;width:26px;height:1px;background:linear-gradient(to right,#d4d4d4,#a6a6a6)"></div>
<div class="a" style="left:27px;top:678px;width:1120px;height:1px;background:#d9d9d9;"></div>
<div class="a" style="left:0px;top:678px;width:26px;height:1px;background:linear-gradient(to right,#d4d4d4,#a6a6a6)"></div>
<div class="a" style="left:27px;top:698px;width:1120px;height:1px;background:#d9d9d9;"></div>
<div class="a" style="left:0px;top:698px;width:26px;height:1px;background:linear-gradient(to right,#d4d4d4,#a6a6a6)"></div>
<div class="a" style="left:27px;top:718px;width:1120px;height:1px;background:#d9d9d9;"></div>
<div class="a" style="left:0px;top:718px;width:26px;height:1px;background:linear-gradient(to right,#d4d4d4,#a6a6a6)"></div>
<div class="a" style="left:27px;top:738px;width:1120px;height:1px;background:#d9d9d9;"></div>
<div class="a" style="left:0px;top:738px;width:26px;height:1px;background:linear-gradient(to right,#d4d4d4,#a6a6a6)"></div>
<div class="a" style="left:106px;top:219px;width:1px;height:511px;background:#d9d9d9;"></div>
<div class="a" style="left:106px;top:199px;width:1px;height:19px;background:linear-gradient(#d6d6d6,#a8a8a8)"></div>
<div class="a" style="left:186px;top:219px;width:1px;height:511px;background:#d9d9d9;"></div>
<div class="a" style="left:186px;top:199px;width:1px;height:19px;background:linear-gradient(#d6d6d6,#a8a8a8)"></div>
<div class="a" style="left:266px;top:219px;width:1px;height:511px;background:#d9d9d9;"></div>
<div class="a" style="left:266px;top:199px;width:1px;height:19px;background:linear-gradient(#d6d6d6,#a8a8a8)"></div>
<div class="a" style="left:346px;top:219px;width:1px;height:511px;background:#d9d9d9;"></div>
<div class="a" style="left:346px;top:199px;width:1px;height:19px;background:linear-gradient(#d6d6d6,#a8a8a8)"></div>
<div class="a" style="left:426px;top:219px;width:1px;height:511px;background:#d9d9d9;"></div>
<div class="a" style="left:426px;top:199px;width:1px;height:19px;background:linear-gradient(#d6d6d6,#a8a8a8)"></div>
<div class="a" style="left:506px;top:219px;width:1px;height:511px;background:#d9d9d9;"></div>
<div class="a" style="left:506px;top:199px;width:1px;height:19px;background:linear-gradient(#d6d6d6,#a8a8a8)"></div>
<div class="a" style="left:586px;top:219px;width:1px;height:511px;background:#d9d9d9;"></div>
<div class="a" style="left:586px;top:199px;width:1px;height:19px;background:linear-gradient(#d6d6d6,#a8a8a8)"></div>
<div class="a" style="left:666px;top:219px;width:1px;height:511px;background:#d9d9d9;"></div>
<div class="a" style="left:666px;top:199px;width:1px;height:19px;background:linear-gradient(#d6d6d6,#a8a8a8)"></div>
<div class="a" style="left:746px;top:219px;width:1px;height:511px;background:#d9d9d9;"></div>
<div class="a" style="left:746px;top:199px;width:1px;height:19px;background:linear-gradient(#d6d6d6,#a8a8a8)"></div>
<div class="a" style="left:826px;top:219px;width:1px;height:511px;background:#d9d9d9;"></div>
<div class="a" style="left:826px;top:199px;width:1px;height:19px;background:linear-gradient(#d6d6d6,#a8a8a8)"></div>
<div class="a" style="left:906px;top:219px;width:1px;height:511px;background:#d9d9d9;"></div>
<div class="a" style="left:906px;top:199px;width:1px;height:19px;background:linear-gradient(#d6d6d6,#a8a8a8)"></div>
<div class="a" style="left:986px;top:219px;width:1px;height:511px;background:#d9d9d9;"></div>
<div class="a" style="left:986px;top:199px;width:1px;height:19px;background:linear-gradient(#d6d6d6,#a8a8a8)"></div>
<div class="a" style="left:1066px;top:219px;width:1px;height:511px;background:#d9d9d9;"></div>
<div class="a" style="left:1066px;top:199px;width:1px;height:19px;background:linear-gradient(#d6d6d6,#a8a8a8)"></div>
<div class="a" style="left:1146px;top:219px;width:1px;height:511px;background:#d9d9d9;"></div>
<div class="a" style="left:1146px;top:199px;width:1px;height:19px;background:linear-gradient(#d6d6d6,#a8a8a8)"></div>
<div class="a" style="left:0px;top:218px;width:1148px;height:1px;background:#9e9e9e;"></div>
<div class="a" style="left:26px;top:199px;width:1px;height:531px;background:#9e9e9e;"></div>
<div class="a" style="left:1147px;top:218px;width:1px;height:512px;background:#9e9e9e;"></div>
<div class="a" style="left:0px;top:729px;width:1148px;height:1px;background:#9e9e9e;"></div>
<div class="t" style="left:62.70px;top:201.23px;font-size:13.33px;color:#262626;transform:scaleX(0.8604);">A</div>
<div class="t" style="left:141.64px;top:201.23px;font-size:13.33px;color:#262626;transform:scaleX(1.0605);">B</div>
<div class="t" style="left:222.34px;top:201.23px;font-size:13.33px;color:#262626;transform:scaleX(0.8471);">C</div>
<div class="t" style="left:301.50px;top:201.23px;font-size:13.33px;color:#262626;">D</div>
<div class="t" style="left:382.55px;top:201.23px;font-size:13.33px;color:#262626;transform:scaleX(0.8455);">E</div>
<div class="t" style="left:462.60px;top:201.23px;font-size:13.33px;color:#262626;transform:scaleX(0.9000);">F</div>
<div class="t" style="left:541.88px;top:201.23px;font-size:13.33px;color:#262626;transform:scaleX(0.9231);">G</div>
<div class="t" style="left:621.43px;top:201.23px;font-size:13.33px;color:#262626;transform:scaleX(1.0667);">H</div>
<div class="t" style="left:704.03px;top:201.23px;font-size:13.33px;color:#262626;transform:scaleX(1.3500);">I</div>
<div class="t" style="left:783.85px;top:201.23px;font-size:13.33px;color:#262626;transform:scaleX(0.9091);">J</div>
<div class="t" style="left:861.77px;top:201.23px;font-size:13.33px;color:#262626;transform:scaleX(0.9783);">K</div>
<div class="t" style="left:942.83px;top:201.23px;font-size:13.33px;color:#262626;transform:scaleX(0.9167);">L</div>
<div class="t" style="left:1020.69px;top:201.23px;font-size:13.33px;color:#262626;transform:scaleX(1.0556);">M</div>
<div class="t" style="left:1101.31px;top:201.23px;font-size:13.33px;color:#262626;transform:scaleX(1.0933);">N</div>
<div class="t" style="left:10.25px;top:222.23px;font-size:13.33px;color:#262626;transform:scaleX(0.7543);">1</div>
<div class="t" style="left:9.35px;top:242.23px;font-size:13.33px;color:#262626;transform:scaleX(1.0541);">2</div>
<div class="t" style="left:9.54px;top:262.23px;font-size:13.33px;color:#262626;transform:scaleX(1.0263);">3</div>
<div class="t" style="left:9.73px;top:282.23px;font-size:13.33px;color:#262626;transform:scaleX(0.9750);">4</div>
<div class="t" style="left:9.54px;top:302.23px;font-size:13.33px;color:#262626;transform:scaleX(1.0263);">5</div>
<div class="t" style="left:9.35px;top:322.23px;font-size:13.33px;color:#262626;transform:scaleX(1.0541);">6</div>
<div class="t" style="left:9.35px;top:342.23px;font-size:13.33px;color:#262626;transform:scaleX(1.0541);">7</div>
<div class="t" style="left:9.54px;top:362.23px;font-size:13.33px;color:#262626;transform:scaleX(1.0263);">8</div>
<div class="t" style="left:9.35px;top:382.23px;font-size:13.33px;color:#262626;transform:scaleX(1.0541);">9</div>
<div class="t" style="left:6.78px;top:402.23px;font-size:13.33px;color:#262626;transform:scaleX(0.9225);">10</div>
<div class="t" style="left:6.69px;top:422.23px;font-size:13.33px;color:#262626;transform:scaleX(1.0110);">11</div>
<div class="t" style="left:6.77px;top:442.23px;font-size:13.33px;color:#262626;transform:scaleX(0.9342);">12</div>
<div class="t" style="left:6.78px;top:462.23px;font-size:13.33px;color:#262626;transform:scaleX(0.9225);">13</div>
<div class="t" style="left:6.79px;top:482.23px;font-size:13.33px;color:#262626;transform:scaleX(0.9111);">14</div>
<div class="t" style="left:6.78px;top:502.23px;font-size:13.33px;color:#262626;transform:scaleX(0.9225);">15</div>
<div class="t" style="left:6.78px;top:522.23px;font-size:13.33px;color:#262626;transform:scaleX(0.9225);">16</div>
<div class="t" style="left:6.77px;top:542.23px;font-size:13.33px;color:#262626;transform:scaleX(0.9342);">17</div>
<div class="t" style="left:6.78px;top:562.23px;font-size:13.33px;color:#262626;transform:scaleX(0.9225);">18</div>
<div class="t" style="left:6.77px;top:582.23px;font-size:13.33px;color:#262626;transform:scaleX(0.9342);">19</div>
<div class="t" style="left:7.10px;top:602.23px;font-size:13.33px;color:#262626;transform:scaleX(0.9000);">20</div>
<div class="t" style="left:7.09px;top:622.23px;font-size:13.33px;color:#262626;transform:scaleX(0.9111);">21</div>
<div class="t" style="left:7.09px;top:642.23px;font-size:13.33px;color:#262626;transform:scaleX(0.9111);">22</div>
<div class="t" style="left:7.10px;top:662.23px;font-size:13.33px;color:#262626;transform:scaleX(0.9000);">23</div>
<div class="t" style="left:7.11px;top:682.23px;font-size:13.33px;color:#262626;transform:scaleX(0.8892);">24</div>
<div class="t" style="left:7.10px;top:702.23px;font-size:13.33px;color:#262626;transform:scaleX(0.9000);">25</div>
<div class="t" style="left:7.10px;top:722.23px;font-size:13.33px;color:#262626;transform:scaleX(0.9000);">26</div>
<div class="t" style="left:29.00px;top:222.23px;font-size:13.33px;color:#000;transform:scaleX(0.9849);">A</div>
<div class="t" style="left:108.45px;top:222.23px;font-size:13.33px;color:#000;transform:scaleX(0.9488);">B</div>
<div class="t" style="left:188.88px;top:222.23px;font-size:13.33px;color:#000;transform:scaleX(0.7765);">C</div>
<div class="t" style="left:268.42px;top:222.23px;font-size:13.33px;color:#000;transform:scaleX(0.9750);">D</div>
<div class="t" style="left:348.61px;top:222.23px;font-size:13.33px;color:#000;transform:scaleX(0.7909);">E</div>
<div class="t" style="left:428.56px;top:222.23px;font-size:13.33px;color:#000;transform:scaleX(0.8400);">F</div>
<div class="t" style="left:82.85px;top:242.23px;font-size:13.33px;color:#000;transform:scaleX(0.9484);">123</div>
<div class="t" style="left:162.32px;top:242.23px;font-size:13.33px;color:#000;transform:scaleX(0.9656);">524</div>
<div class="t" style="left:243.28px;top:242.23px;font-size:13.33px;color:#000;transform:scaleX(0.9286);">731</div>
<div class="t" style="left:322.64px;top:242.23px;font-size:13.33px;color:#000;transform:scaleX(0.9581);">142</div>
<div class="t" style="left:402.72px;top:242.23px;font-size:13.33px;color:#000;transform:scaleX(0.9543);">567</div>
<div class="t" style="left:482.64px;top:242.23px;font-size:13.33px;color:#000;transform:scaleX(0.9581);">142</div>
<div class="t" style="left:82.85px;top:282.23px;font-size:13.33px;color:#000;transform:scaleX(0.9484);">123</div>
<div class="t" style="left:162.32px;top:282.23px;font-size:13.33px;color:#000;transform:scaleX(0.9656);">524</div>
<div class="t" style="left:243.28px;top:282.23px;font-size:13.33px;color:#000;transform:scaleX(0.9286);">731</div>
<div class="t" style="left:322.64px;top:282.23px;font-size:13.33px;color:#000;transform:scaleX(0.9581);">142</div>
<div class="t" style="left:402.72px;top:282.23px;font-size:13.33px;color:#000;transform:scaleX(0.9543);">567</div>
<div class="t" style="left:482.64px;top:282.23px;font-size:13.33px;color:#000;transform:scaleX(0.9581);">142</div>
<div class="t" style="left:82.85px;top:302.23px;font-size:13.33px;color:#000;transform:scaleX(0.9484);">123</div>
<div class="t" style="left:162.32px;top:302.23px;font-size:13.33px;color:#000;transform:scaleX(0.9656);">524</div>
<div class="t" style="left:243.28px;top:302.23px;font-size:13.33px;color:#000;transform:scaleX(0.9286);">731</div>
<div class="t" style="left:322.64px;top:302.23px;font-size:13.33px;color:#000;transform:scaleX(0.9581);">142</div>
<div class="t" style="left:402.72px;top:302.23px;font-size:13.33px;color:#000;transform:scaleX(0.9543);">567</div>
<div class="t" style="left:482.64px;top:302.23px;font-size:13.33px;color:#000;transform:scaleX(0.9581);">142</div>
<div class="t" style="left:82.85px;top:322.23px;font-size:13.33px;color:#000;transform:scaleX(0.9484);">123</div>
<div class="t" style="left:162.32px;top:322.23px;font-size:13.33px;color:#000;transform:scaleX(0.9656);">524</div>
<div class="t" style="left:243.28px;top:322.23px;font-size:13.33px;color:#000;transform:scaleX(0.9286);">731</div>
<div class="t" style="left:322.64px;top:322.23px;font-size:13.33px;color:#000;transform:scaleX(0.9581);">142</div>
<div class="t" style="left:402.72px;top:322.23px;font-size:13.33px;color:#000;transform:scaleX(0.9543);">567</div>
<div class="t" style="left:482.64px;top:322.23px;font-size:13.33px;color:#000;transform:scaleX(0.9581);">142</div>
<div class="t" style="left:82.85px;top:342.23px;font-size:13.33px;color:#000;transform:scaleX(0.9484);">123</div>
<div class="t" style="left:162.32px;top:342.23px;font-size:13.33px;color:#000;transform:scaleX(0.9656);">524</div>
<div class="t" style="left:243.28px;top:342.23px;font-size:13.33px;color:#000;transform:scaleX(0.9286);">731</div>
<div class="t" style="left:322.64px;top:342.23px;font-size:13.33px;color:#000;transform:scaleX(0.9581);">142</div>
<div class="t" style="left:402.72px;top:342.23px;font-size:13.33px;color:#000;transform:scaleX(0.9543);">567</div>
<div class="t" style="left:482.64px;top:342.23px;font-size:13.33px;color:#000;transform:scaleX(0.9581);">142</div>
<div class="t" style="left:82.85px;top:382.23px;font-size:13.33px;color:#000;transform:scaleX(0.9484);">123</div>
<div class="t" style="left:162.32px;top:382.23px;font-size:13.33px;color:#000;transform:scaleX(0.9656);">524</div>
<div class="t" style="left:243.28px;top:382.23px;font-size:13.33px;color:#000;transform:scaleX(0.9286);">731</div>
<div class="t" style="left:322.64px;top:382.23px;font-size:13.33px;color:#000;transform:scaleX(0.9581);">142</div>
<div class="t" style="left:402.72px;top:382.23px;font-size:13.33px;color:#000;transform:scaleX(0.9543);">567</div>
<div class="t" style="left:482.64px;top:382.23px;font-size:13.33px;color:#000;transform:scaleX(0.9581);">142</div>
<div class="t" style="left:82.85px;top:402.23px;font-size:13.33px;color:#000;transform:scaleX(0.9484);">123</div>
<div class="t" style="left:162.32px;top:402.23px;font-size:13.33px;color:#000;transform:scaleX(0.9656);">524</div>
<div class="t" style="left:243.28px;top:402.23px;font-size:13.33px;color:#000;transform:scaleX(0.9286);">731</div>
<div class="t" style="left:322.64px;top:402.23px;font-size:13.33px;color:#000;transform:scaleX(0.9581);">142</div>
<div class="t" style="left:402.72px;top:402.23px;font-size:13.33px;color:#000;transform:scaleX(0.9543);">567</div>
<div class="t" style="left:482.64px;top:402.23px;font-size:13.33px;color:#000;transform:scaleX(0.9581);">142</div>
<div class="a" style="left:1148px;top:198px;width:21px;height:532px;background:#e6e6e6;"></div>
<div class="a" style="left:1151px;top:201px;width:15px;height:15px;background:#fff;border:1px solid #ababab;"></div>
<svg style="left:1155px;top:206px" width="7" height="4" viewBox="0 0 7 4"><path d="M0 3.6L3.5 0L7 3.6Z" fill="#606060"/></svg>
<div class="a" style="left:1151px;top:215px;width:15px;height:480px;background:#fff;border:1px solid #ababab;"></div>
<div class="a" style="left:1151px;top:694px;width:15px;height:21px;background:#d9d9d9;"></div>
<div class="a" style="left:1151px;top:715px;width:15px;height:15px;background:#fff;border:1px solid #ababab;"></div>
<svg style="left:1155px;top:721px" width="7" height="4" viewBox="0 0 7 4"><path d="M0 0L3.5 3.6L7 0Z" fill="#606060"/></svg>
<div class="a" style="left:0px;top:730px;width:1170px;height:27px;background:#e6e6e6;"></div>
<svg style="left:27px;top:737px" width="40" height="10" viewBox="0 0 40 10"><path d="M5 1L1 5L5 9Z M30 1L34 5L30 9Z" fill="#bdbdbd"/></svg>
<div class="a" style="left:101px;top:729px;width:31px;height:26px;background:#fff;border:1px solid #9e9e9e;border-top:none"></div>
<div class="a" style="left:102px;top:752px;width:29px;height:2px;background:#217346;"></div>
<div class="t" style="left:112.67px;top:735.13px;font-size:12.90px;color:#217346;transform:scaleX(1.0632);-webkit-text-stroke:0.35px #217346">1</div>
<svg style="left:165px;top:734px" width="18" height="18" viewBox="0 0 18 18"><circle cx="8.5" cy="8.5" r="7.5" fill="none" stroke="#707070" stroke-width="1.2"/><path d="M8.5 4.5V12.5M4.5 8.5H12.5" stroke="#555" stroke-width="1.6"/></svg>
<svg style="left:700px;top:736px" width="4" height="14" viewBox="0 0 4 14"><g fill="#aaa"><rect x="1" y="1" width="2" height="2"/><rect x="1" y="6" width="2" height="2"/><rect x="1" y="11" width="2" height="2"/></g></svg>
<div class="a" style="left:719px;top:736px;width:15px;height:15px;background:#fff;border:1px solid #ababab;"></div>
<svg style="left:724px;top:740px" width="4" height="7" viewBox="0 0 4 7"><path d="M4 0L0 3.4L4 6.8Z" fill="#606060"/></svg>
<div class="a" style="left:734px;top:736px;width:368px;height:15px;background:#fff;border:1px solid #ababab;"></div>
<div class="a" style="left:1102px;top:736px;width:31px;height:15px;background:#d9d9d9;"></div>
<div class="a" style="left:1133px;top:736px;width:15px;height:15px;background:#fff;border:1px solid #ababab;"></div>
<svg style="left:1139px;top:740px" width="4" height="7" viewBox="0 0 4 7"><path d="M0 0L4 3.4L0 6.8Z" fill="#606060"/></svg>
<div class="a" style="left:0px;top:757px;width:1170px;height:1px;background:#c6c6c6;"></div>
<div class="a" style="left:0px;top:758px;width:1170px;height:22px;background:#f1f1f1;"></div>
<div class="t" style="left:7.69px;top:762.17px;font-size:11.01px;color:#444444;transform:scaleX(0.9846);">Ready</div>
<div class="t" style="left:657.40px;top:761.73px;font-size:11.59px;color:#444444;transform:scaleX(0.9405);">Average: 123</div>
<div class="t" style="left:737.92px;top:761.73px;font-size:11.59px;color:#444444;transform:scaleX(1.0058);">Count: 8</div>
<div class="t" style="left:797.87px;top:761.73px;font-size:11.59px;color:#444444;transform:scaleX(0.9207);">Sum: 861</div>
<div class="a" style="left:863px;top:758px;width:38px;height:21px;background:#c8c8c8;"></div>
<svg style="left:870px;top:756px" width="100" height="22" viewBox="0 0 100 22"><g transform="translate(-870,-756)" fill="none" stroke="#686868" stroke-width="1">
<path d="M875.5 761.5H887.5V773.5H875.5ZM875.5 765.5H887.5M875.5 769.5H887.5M879.5 761.5V773.5M883.5 761.5V773.5"/>
<path d="M913.5 761.5H926.5V773.5H913.5Z"/><path d="M916.5 763.5H923.5V771H916.5Z"/><path d="M918 765.5H922M918 767.5H922M918 769.5H922"/>
<path d="M951.5 761.5H964.5V773.5H951.5Z"/><path d="M955.5 761.5V768.5M959.5 761.5V768.5H951.5"/>
</g></svg>
<div class="a" style="left:982px;top:767px;width:6px;height:2px;background:#555;"></div>
<div class="a" style="left:992px;top:767px;width:100px;height:1px;background:#aaa;"></div>
<div class="a" style="left:1040px;top:761px;width:4px;height:12px;background:#555;"></div>
<svg style="left:1096px;top:763px" width="9" height="9" viewBox="0 0 9 9"><path d="M4.5 0V9M0 4.5H9" stroke="#555" stroke-width="1.8"/></svg>
<div class="t" style="left:1120.21px;top:761.23px;font-size:11.59px;color:#444444;transform:scaleX(0.9116);">100 %</div>
<div class="a" style="left:551px;top:168px;width:314px;height:329px;box-shadow:0 0 12px 2px rgba(0,0,0,.22)"></div>
<div class="a" style="left:551px;top:168px;width:314px;height:329px;background:#f0f0f0;border:1px solid #aaa;"></div>
<div class="a" style="left:552px;top:169px;width:312px;height:30px;background:#fff;"></div>
<div class="t" style="left:559.92px;top:177.27px;font-size:11.88px;color:#8a8a8a;transform:scaleX(0.9717);">Go To Special</div>
<div class="t" style="left:792.98px;top:174.97px;font-size:14.93px;color:#808080;transform:scaleX(0.7420);">?</div>
<svg style="left:836px;top:178px" width="11" height="11" viewBox="0 0 11 11"><path d="M0.3 0.3L10 10M10 0.3L0.3 10" stroke="#707070" stroke-width="1"/></svg>
<div class="t" style="left:557.96px;top:206.57px;font-size:11.88px;color:#000;transform:scaleX(0.9017);">Select</div>
<div class="a" style="left:593px;top:212px;width:265px;height:1px;background:#dcdcdc;"></div>
<svg style="left:566.5px;top:226.0px" width="14" height="14" viewBox="0 0 14 14"><circle cx="7" cy="7" r="6" fill="#fff" stroke="#333" stroke-width="1.2"/></svg>
<div class="t" style="left:584.50px;top:227.63px;font-size:11.59px;color:#000;transform:scaleX(0.9487);"><u>C</u>omments</div>
<svg style="left:566.5px;top:245.0px" width="14" height="14" viewBox="0 0 14 14"><circle cx="7" cy="7" r="6" fill="#fff" stroke="#333" stroke-width="1.2"/></svg>
<div class="t" style="left:583.92px;top:246.63px;font-size:11.59px;color:#000;">C<u>o</u>nstants</div>
<svg style="left:566.5px;top:264.0px" width="14" height="14" viewBox="0 0 14 14"><circle cx="7" cy="7" r="6" fill="#fff" stroke="#333" stroke-width="1.2"/></svg>
<div class="t" style="left:584.50px;top:265.63px;font-size:11.59px;color:#000;transform:scaleX(0.9568);"><u>F</u>ormulas</div>
<svg style="left:585px;top:284px" width="13" height="13" viewBox="0 0 13 13"><rect x="0.5" y="0.5" width="12" height="12" fill="#f7f7f7" stroke="#c8c8c8"/><path d="M2.5 6.5L5 9L10.5 3" fill="none" stroke="#bdbdbd" stroke-width="1.3"/></svg>
<div class="t" style="left:601.66px;top:284.63px;font-size:11.59px;color:#8f8f8f;transform:scaleX(0.9717);">Numbers</div>
<svg style="left:585px;top:303px" width="13" height="13" viewBox="0 0 13 13"><rect x="0.5" y="0.5" width="12" height="12" fill="#f7f7f7" stroke="#c8c8c8"/><path d="M2.5 6.5L5 9L10.5 3" fill="none" stroke="#bdbdbd" stroke-width="1.3"/></svg>
<div class="t" style="left:602.23px;top:303.63px;font-size:11.59px;color:#8f8f8f;transform:scaleX(0.9200);">Text</div>
<svg style="left:585px;top:322px" width="13" height="13" viewBox="0 0 13 13"><rect x="0.5" y="0.5" width="12" height="12" fill="#f7f7f7" stroke="#c8c8c8"/><path d="M2.5 6.5L5 9L10.5 3" fill="none" stroke="#bdbdbd" stroke-width="1.3"/></svg>
<div class="t" style="left:601.66px;top:322.63px;font-size:11.59px;color:#8f8f8f;transform:scaleX(0.9636);">Logicals</div>
<svg style="left:585px;top:341px" width="13" height="13" viewBox="0 0 13 13"><rect x="0.5" y="0.5" width="12" height="12" fill="#f7f7f7" stroke="#c8c8c8"/><path d="M2.5 6.5L5 9L10.5 3" fill="none" stroke="#bdbdbd" stroke-width="1.3"/></svg>
<div class="t" style="left:601.67px;top:341.63px;font-size:11.59px;color:#8f8f8f;transform:scaleX(0.9541);">Errors</div>
<svg style="left:566.5px;top:359.0px" width="14" height="14" viewBox="0 0 14 14"><circle cx="7" cy="7" r="6" fill="#fff" stroke="#333" stroke-width="1.2"/><circle cx="7" cy="7" r="3.6" fill="#333"/></svg>
<div class="t" style="left:583.64px;top:360.63px;font-size:11.59px;color:#000;transform:scaleX(0.9917);">Blan<u>k</u>s</div>
<svg style="left:566.5px;top:378.0px" width="14" height="14" viewBox="0 0 14 14"><circle cx="7" cy="7" r="6" fill="#fff" stroke="#333" stroke-width="1.2"/></svg>
<div class="t" style="left:583.90px;top:379.63px;font-size:11.59px;color:#000;transform:scaleX(1.0295);">Current <u>r</u>egion</div>
<svg style="left:566.5px;top:397.0px" width="14" height="14" viewBox="0 0 14 14"><circle cx="7" cy="7" r="6" fill="#fff" stroke="#333" stroke-width="1.2"/></svg>
<div class="t" style="left:583.93px;top:398.63px;font-size:11.59px;color:#000;transform:scaleX(0.9811);">Current <u>a</u>rray</div>
<svg style="left:566.5px;top:416.0px" width="14" height="14" viewBox="0 0 14 14"><circle cx="7" cy="7" r="6" fill="#fff" stroke="#333" stroke-width="1.2"/></svg>
<div class="t" style="left:583.92px;top:417.63px;font-size:11.59px;color:#000;">O<u>b</u>jects</div>
<svg style="left:716.5px;top:226.0px" width="14" height="14" viewBox="0 0 14 14"><circle cx="7" cy="7" r="6" fill="#fff" stroke="#333" stroke-width="1.2"/></svg>
<div class="t" style="left:733.42px;top:227.63px;font-size:11.59px;color:#000;transform:scaleX(1.0074);">Ro<u>w</u> differences</div>
<svg style="left:716.5px;top:245.0px" width="14" height="14" viewBox="0 0 14 14"><circle cx="7" cy="7" r="6" fill="#fff" stroke="#333" stroke-width="1.2"/></svg>
<div class="t" style="left:733.72px;top:246.63px;font-size:11.59px;color:#000;">Colu<u>m</u>n differences</div>
<svg style="left:716.5px;top:264.0px" width="14" height="14" viewBox="0 0 14 14"><circle cx="7" cy="7" r="6" fill="#fff" stroke="#333" stroke-width="1.2"/></svg>
<div class="t" style="left:734.30px;top:265.63px;font-size:11.59px;color:#000;transform:scaleX(0.9423);"><u>P</u>recedents</div>
<svg style="left:716.5px;top:283.0px" width="14" height="14" viewBox="0 0 14 14"><circle cx="7" cy="7" r="6" fill="#fff" stroke="#333" stroke-width="1.2"/></svg>
<div class="t" style="left:734.30px;top:284.63px;font-size:11.59px;color:#000;"><u>D</u>ependents</div>
<svg style="left:734.5px;top:302.0px" width="14" height="14" viewBox="0 0 14 14"><circle cx="7" cy="7" r="6" fill="#fff" stroke="#c2c2c2" stroke-width="1.2"/><circle cx="7" cy="7" r="3.6" fill="#c8c8c8"/></svg>
<div class="t" style="left:751.42px;top:303.63px;font-size:11.59px;color:#8f8f8f;transform:scaleX(1.0127);">Direct only</div>
<svg style="left:734.5px;top:321.0px" width="14" height="14" viewBox="0 0 14 14"><circle cx="7" cy="7" r="6" fill="#fff" stroke="#c2c2c2" stroke-width="1.2"/></svg>
<div class="t" style="left:752.30px;top:322.63px;font-size:11.59px;color:#8f8f8f;transform:scaleX(0.9501);">All levels</div>
<svg style="left:716.5px;top:340.0px" width="14" height="14" viewBox="0 0 14 14"><circle cx="7" cy="7" r="6" fill="#fff" stroke="#333" stroke-width="1.2"/></svg>
<div class="t" style="left:733.47px;top:341.63px;font-size:11.59px;color:#000;transform:scaleX(0.9567);">La<u>s</u>t cell</div>
<svg style="left:716.5px;top:359.0px" width="14" height="14" viewBox="0 0 14 14"><circle cx="7" cy="7" r="6" fill="#fff" stroke="#333" stroke-width="1.2"/></svg>
<div class="t" style="left:734.30px;top:360.63px;font-size:11.59px;color:#000;transform:scaleX(0.9879);">Visible cells onl<u>y</u></div>
<svg style="left:716.5px;top:378.0px" width="14" height="14" viewBox="0 0 14 14"><circle cx="7" cy="7" r="6" fill="#fff" stroke="#333" stroke-width="1.2"/></svg>
<div class="t" style="left:733.70px;top:379.63px;font-size:11.59px;color:#000;transform:scaleX(1.0340);">Condi<u>t</u>ional formats</div>
<svg style="left:716.5px;top:397.0px" width="14" height="14" viewBox="0 0 14 14"><circle cx="7" cy="7" r="6" fill="#fff" stroke="#333" stroke-width="1.2"/></svg>
<div class="t" style="left:733.41px;top:398.63px;font-size:11.59px;color:#000;transform:scaleX(1.0283);">Data <u>v</u>alidation</div>
<svg style="left:734.5px;top:416.0px" width="14" height="14" viewBox="0 0 14 14"><circle cx="7" cy="7" r="6" fill="#fff" stroke="#c2c2c2" stroke-width="1.2"/><circle cx="7" cy="7" r="3.6" fill="#c8c8c8"/></svg>
<div class="t" style="left:752.30px;top:417.63px;font-size:11.59px;color:#8f8f8f;transform:scaleX(1.0104);">All</div>
<svg style="left:734.5px;top:435.0px" width="14" height="14" viewBox="0 0 14 14"><circle cx="7" cy="7" r="6" fill="#fff" stroke="#c2c2c2" stroke-width="1.2"/></svg>
<div class="t" style="left:751.78px;top:436.63px;font-size:11.59px;color:#8f8f8f;transform:scaleX(0.8950);">Same</div>
<div class="a" style="left:699px;top:467px;width:74px;height:22px;background:#e1e1e1;border:2px solid #0078d7;"></div>
<div class="t" style="left:728.17px;top:471.93px;font-size:11.59px;color:#000;transform:scaleX(0.9095);">OK</div>
<div class="a" style="left:783px;top:467px;width:74px;height:22px;background:#e1e1e1;border:1px solid #adadad;"></div>
<div class="t" style="left:802.85px;top:471.93px;font-size:11.59px;color:#000;transform:scaleX(0.9487);">Cancel</div>
<div class="a" style="left:558px;top:349px;width:71px;height:33px;border:5px solid #ec1c24;"></div>
<div class="a" style="left:0px;top:0px;width:1170px;height:780px;border:1px solid #8c8c8c;"></div>
</body></html>
